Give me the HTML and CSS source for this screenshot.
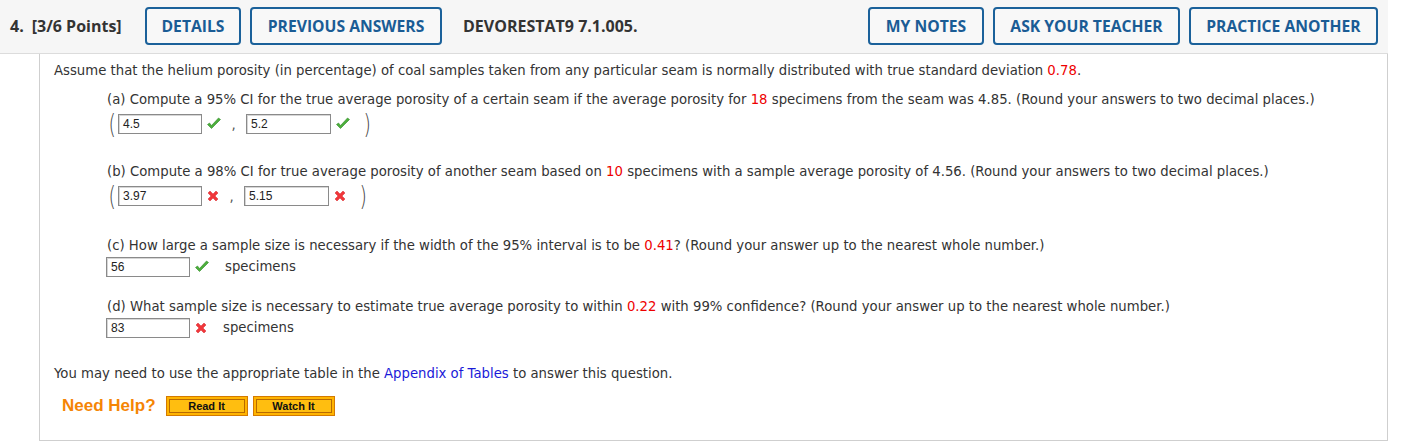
FILE: index.html
```html
<!DOCTYPE html>
<html>
<head>
<meta charset="utf-8">
<link rel="stylesheet" href="styles.css">
</head>
<body>
<div class="question">
  <div class="qhead">
    <div class="qnum"><span class="num">4.</span><span class="pts">[3/6 Points]</span></div>
    <button class="hbtn btn-details">DETAILS</button>
    <button class="hbtn btn-prev">PREVIOUS ANSWERS</button>
    <div class="qid">DEVORESTAT9 7.1.005.</div>
    <div class="spacer"></div>
    <button class="hbtn btn-notes">MY NOTES</button>
    <button class="hbtn btn-ask">ASK YOUR TEACHER</button>
    <button class="hbtn btn-practice">PRACTICE ANOTHER</button>
  </div>
  <div class="qbody">
    <p class="intro">Assume that the helium porosity (in percentage) of coal samples taken from any particular seam is normally distributed with true standard deviation <span class="red">0.78</span>.</p>

    <div class="part">
      <p class="ptext">(a) Compute a 95% CI for the true average porosity of a certain seam if the average porosity for <span class="red">18</span> specimens from the seam was 4.85. (Round your answers to two decimal places.)</p>
      <div class="interval">
        <span class="paren">(</span>
        <span class="ans">4.5</span>
        <svg class="mark" viewBox="0 0 16 14"><path d="M1.5 7.5 L5.5 11.5 L14.5 2.5 L12.5 1 L5.5 8.5 L3.5 6 Z" fill="#4cae3a" stroke="#2f8c2a" stroke-width="0.6" stroke-linejoin="round"/></svg>
        <span class="comma">,</span>
        <span class="ans">5.2</span>
        <svg class="mark" viewBox="0 0 16 14"><path d="M1.5 7.5 L5.5 11.5 L14.5 2.5 L12.5 1 L5.5 8.5 L3.5 6 Z" fill="#4cae3a" stroke="#2f8c2a" stroke-width="0.6" stroke-linejoin="round"/></svg>
        <span class="paren">)</span>
      </div>
    </div>

    <div class="part part-b">
      <p class="ptext">(b) Compute a 98% CI for true average porosity of another seam based on <span class="red">10</span> specimens with a sample average porosity of 4.56. (Round your answers to two decimal places.)</p>
      <div class="interval">
        <span class="paren">(</span>
        <span class="ans">3.97</span>
        <svg class="mark x" viewBox="0 0 14 14"><path d="M2 4 L4 2 L7 5 L10 2 L12 4 L9 7 L12 10 L10 12 L7 9 L4 12 L2 10 L5 7 Z" fill="#f0373b" stroke="#d8262b" stroke-width="0.5" stroke-linejoin="round"/></svg>
        <span class="comma">,</span>
        <span class="ans">5.15</span>
        <svg class="mark x" viewBox="0 0 14 14"><path d="M2 4 L4 2 L7 5 L10 2 L12 4 L9 7 L12 10 L10 12 L7 9 L4 12 L2 10 L5 7 Z" fill="#f0373b" stroke="#d8262b" stroke-width="0.5" stroke-linejoin="round"/></svg>
        <span class="paren">)</span>
      </div>
    </div>

    <div class="part part-c">
      <p class="ptext">(c) How large a sample size is necessary if the width of the 95% interval is to be <span class="red">0.41</span>? (Round your answer up to the nearest whole number.)</p>
      <div class="single">
        <span class="ans">56</span>
        <svg class="mark" viewBox="0 0 16 14"><path d="M1.5 7.5 L5.5 11.5 L14.5 2.5 L12.5 1 L5.5 8.5 L3.5 6 Z" fill="#4cae3a" stroke="#2f8c2a" stroke-width="0.6" stroke-linejoin="round"/></svg>
        <span class="unit">specimens</span>
      </div>
    </div>

    <div class="part part-d">
      <p class="ptext">(d) What sample size is necessary to estimate true average porosity to within <span class="red">0.22</span> with 99% confidence? (Round your answer up to the nearest whole number.)</p>
      <div class="single">
        <span class="ans">83</span>
        <svg class="mark x" viewBox="0 0 14 14"><path d="M2 4 L4 2 L7 5 L10 2 L12 4 L9 7 L12 10 L10 12 L7 9 L4 12 L2 10 L5 7 Z" fill="#f0373b" stroke="#d8262b" stroke-width="0.5" stroke-linejoin="round"/></svg>
        <span class="unit">specimens</span>
      </div>
    </div>

    <p class="note">You may need to use the appropriate table in the <a class="link">Appendix of Tables</a> to answer this question.</p>

    <div class="help">
      <span class="needhelp">Need Help?</span>
      <span class="hlp"><span class="hlp-in">Read It</span></span>
      <span class="hlp"><span class="hlp-in">Watch It</span></span>
    </div>
  </div>
</div>
</body>
</html>
```

FILE: styles.css
```css
html, body {
  margin: 0;
  padding: 0;
  background: #ffffff;
}
.question {
  width: 1388px;
}
.qhead {
  display: flex;
  align-items: center;
  height: 54px;
  box-sizing: border-box;
  background: #f6f6f6;
  border-bottom: 1px solid #dcdcdc;
  padding: 0 10px 1px 10px;
  font-family: "Open Sans", sans-serif;
  font-weight: 700;
  font-size: 16px;
  color: #333333;
}
.qnum {
  display: flex;
  gap: 8px;
  width: 135px;
}
.hbtn {
  height: 38px;
  box-sizing: border-box;
  border: 2px solid #1b619a;
  border-radius: 4px;
  background: #f8f8f8;
  color: #1a5c95;
  font-family: "Open Sans", sans-serif;
  font-weight: 700;
  font-size: 15.7px;
  padding: 0 8px;
  margin-right: 9px;
}
.btn-details { width: 96px; }
.btn-prev { width: 192px; }
.qid {
  margin-left: 12px;
}
.spacer { flex: 1; }
.btn-notes { width: 116px; }
.btn-ask { width: 187px; }
.btn-practice { width: 189px; margin-right: 0; }

.qbody {
  margin-left: 39px;
  border-left: 1px solid #cfcfcf;
  border-right: 1px solid #cfcfcf;
  border-bottom: 1px solid #cfcfcf;
  height: 387px;
  box-sizing: border-box;
  padding: 8px 0 0 14px;
  font-family: "DejaVu Sans", Verdana, sans-serif;
  font-size: 13.25px;
  color: #333333;
}
p { margin: 0; }
.red { color: #ee0000; }
.intro {
  line-height: 18px;
}
.part {
  padding-left: 53px;
}
.ptext {
  line-height: 18px;
  margin-top: 11px;
}
.interval {
  display: flex;
  align-items: center;
  height: 28px;
  margin-top: 1px;
}
.paren {
  font-family: "DejaVu Sans", sans-serif;
  font-size: 27px;
  font-weight: 200;
  color: #444;
  line-height: 28px;
  transform: scaleX(0.7);
  width: 10px;
  text-align: center;
}
.ans {
  display: inline-block;
  width: 85px;
  height: 20px;
  box-sizing: border-box;
  border: 1px solid #8a8a8a;
  box-shadow: inset 1px 1px 0 #d6d6d6;
  font-family: "Liberation Sans", Arial, sans-serif;
  font-size: 12px;
  color: #222;
  line-height: 18px;
  padding-left: 4px;
  background: #fff;
}
.interval .ans { margin-left: 1px; }
.interval .ans:nth-of-type(2) { width: 84px; }
.mark {
  width: 16px;
  height: 14px;
  margin-left: 4px;
}
.mark.x {
  width: 14px;
}
.comma {
  width: 23px;
  text-align: center;
  color: #555;
}
.interval .paren:last-child { margin-left: 11px; }
.part-b .ptext { margin-top: 25px; }
.single {
  display: flex;
  align-items: center;
  height: 21px;
  margin-top: 1px;
  margin-left: -1px;
}
.single .ans { width: 84px; }
.single .unit { margin-left: 15px; }
.part-c .ptext { margin-top: 27px; }
.part-d .ptext { margin-top: 21px; }
.note {
  margin-top: 27px;
  line-height: 18px;
}
.link {
  color: #1a1ad8;
  text-decoration: none;
}
.help {
  display: flex;
  align-items: center;
  gap: 5px;
  margin-top: 13px;
  padding-left: 8px;
}
.needhelp {
  font-family: "Liberation Sans", Arial, sans-serif;
  font-weight: 700;
  font-size: 17px;
  color: #f58505;
  margin-right: 5px;
}
.hlp {
  display: inline-block;
  width: 82px;
  height: 20px;
  box-sizing: border-box;
  border: 1px solid #d47a00;
  background: #ffb400;
  padding: 2px;
}
.hlp-in {
  display: block;
  height: 14px;
  border: 1px solid #b86a00;
  box-sizing: border-box;
  background: #ffbe10;
  font-family: "Liberation Sans", Arial, sans-serif;
  font-weight: 700;
  font-size: 11px;
  line-height: 12px;
  text-align: center;
  color: #111;
}
```
